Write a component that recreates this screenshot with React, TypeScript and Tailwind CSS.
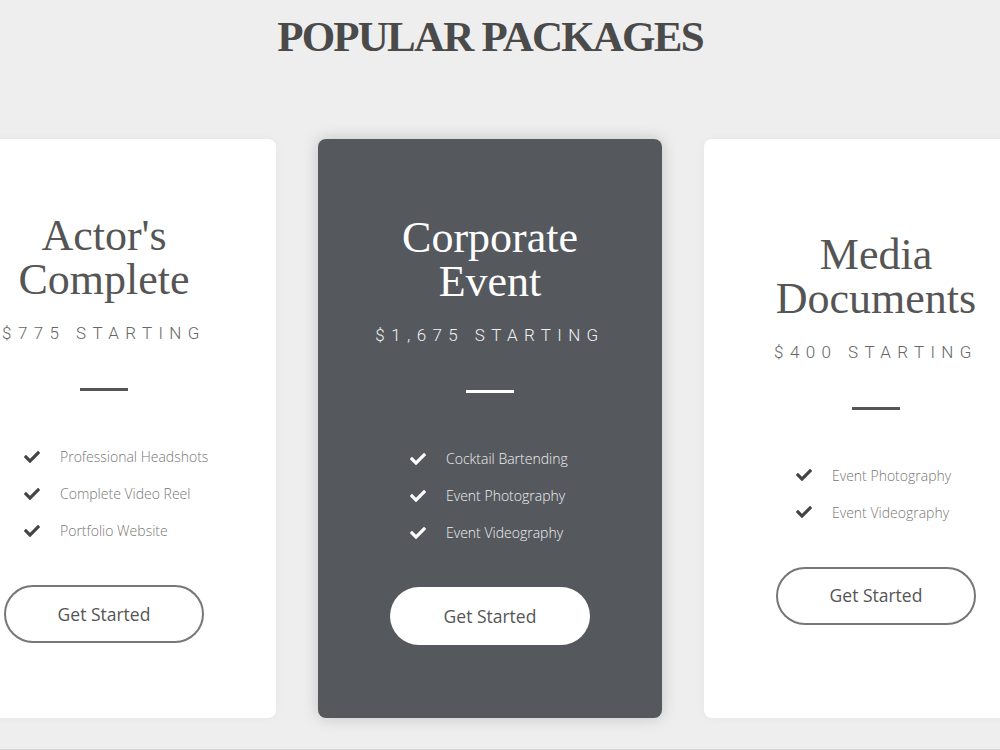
import { FaCheck } from 'react-icons/fa'

interface Pkg {
  title: [string, string]
  price: string
  features: string[]
  dark?: boolean
}

const packages: Pkg[] = [
  {
    title: ["Actor's", 'Complete'],
    price: '$775 STARTING',
    features: ['Professional Headshots', 'Complete Video Reel', 'Portfolio Website'],
  },
  {
    title: ['Corporate', 'Event'],
    price: '$1,675 STARTING',
    features: ['Cocktail Bartending', 'Event Photography', 'Event Videography'],
    dark: true,
  },
  {
    title: ['Media', 'Documents'],
    price: '$400 STARTING',
    features: ['Event Photography', 'Event Videography'],
  },
]

function PackageCard({ pkg }: { pkg: Pkg }) {
  const dark = !!pkg.dark
  return (
    <div
      className={`w-[344px] h-[579px] shrink-0 rounded-lg flex flex-col items-center justify-center ${
        dark
          ? 'bg-[#55595e] shadow-[0_0_16px_rgba(0,0,0,0.18)] pt-[4px]'
          : 'bg-white shadow-[0_0_10px_rgba(0,0,0,0.04)]'
      }`}
    >
      {/* Title */}
      <h3
        className={`text-center text-[44px] leading-[44px] font-['Liberation_Serif',serif] ${
          dark ? 'text-white' : 'text-[#555555]'
        }`}
      >
        <span className="block">{pkg.title[0]}</span>
        <span className="block">{pkg.title[1]}</span>
      </h3>

      {/* Price */}
      <p
        className={`mt-[21px] text-[17px] leading-[20px] font-light tracking-[6.4px] font-['Roboto',sans-serif] ${
          dark ? 'text-[#f0f0f0]' : 'text-[#666666]'
        }`}
      >
        {pkg.price}
      </p>

      <div className={`mt-[45px] w-12 h-[3px] ${dark ? 'bg-white' : 'bg-[#555555]'}`} />

      {/* Features */}
      <ul className="mt-[47px] w-[160px]">
        {pkg.features.map(f => (
          <li key={f} className="h-[37px] flex items-center whitespace-nowrap">
            <FaCheck size={16} className={`shrink-0 ${dark ? 'text-white' : 'text-[#444444]'}`} />
            <span
              className={`ml-5 text-[14px] font-light font-['Open_Sans',sans-serif] ${
                dark ? 'text-[#eeeeee]' : 'text-[#777777]'
              }`}
            >
              {f}
            </span>
          </li>
        ))}
      </ul>

      {/* CTA */}
      <button
        className={`mt-[36px] w-[200px] h-[58px] rounded-full text-[17.5px] text-[#555555] font-['Open_Sans',sans-serif] ${
          dark ? 'bg-white' : 'border-2 border-[#777777] bg-transparent'
        }`}
      >
        Get Started
      </button>
    </div>
  )
}

export default function App() {
  return (
    <div className="h-[750px] bg-[#efeeee] overflow-hidden border-b border-[#d6d6d6]">
      <div className="w-[980px]">
        <h2 className="pt-[15px] text-center text-[43px] leading-[43px] font-bold tracking-[-1.8px] text-[#4a4a4a] font-['Liberation_Serif',serif]">
          POPULAR PACKAGES
        </h2>
        <div className="mt-[81px] flex justify-center gap-[42px]">
          {packages.map(p => (
            <PackageCard key={p.price} pkg={p} />
          ))}
        </div>
      </div>
    </div>
  )
}
